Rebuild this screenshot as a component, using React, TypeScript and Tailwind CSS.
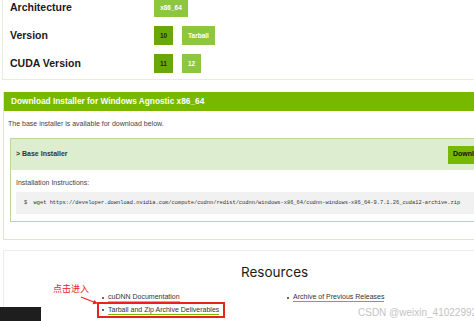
import React from 'react';

const dark = 'bg-[#69a80a] text-[#1d2a05]';
const light = 'bg-[#8dc63f] text-white';

function OptionRow({ label, options }: { label: string; options: { text: string; w: string; on?: boolean }[] }) {
  return (
    <div className="flex items-center h-[19px]">
      <div className="w-[144px] text-[10.5px] font-bold text-[#1a1a1a]">{label}</div>
      <div className="flex gap-[9px]">
        {options.map((o) => (
          <div
            key={o.text}
            className={`${o.w} h-[19px] flex items-center justify-center text-[6.5px] font-bold ${o.on ? dark : light}`}
          >
            {o.text}
          </div>
        ))}
      </div>
    </div>
  );
}

function Bullet() {
  return <span className="inline-block w-[2px] h-[2px] bg-[#333] rounded-full mr-[4px] shrink-0" />;
}

export default function App() {
  return (
    <div className="relative w-[474px] h-[321px] overflow-hidden bg-white font-['Liberation_Sans',Arial,sans-serif]">
      <div className="w-[560px]">
        {/* Selector card */}
        <div className="-mt-[10px] ml-[2px] border border-[#e6eddb] pt-[7px] pb-[6px] pl-[7px] flex flex-col gap-[9px]">
          <OptionRow label="Architecture" options={[{ text: 'x86_64', w: 'w-[34px]' }]} />
          <OptionRow
            label="Version"
            options={[
              { text: '10', w: 'w-[19px]', on: true },
              { text: 'Tarball', w: 'w-[33px]' },
            ]}
          />
          <OptionRow
            label="CUDA Version"
            options={[
              { text: '11', w: 'w-[19px]', on: true },
              { text: '12', w: 'w-[19px]' },
            ]}
          />
        </div>

        {/* Download card */}
        <div className="mt-[12px] ml-[3px] border-x border-b border-[#dbe8c9]">
          <div className="h-[19px] bg-[#76b900] flex items-center pl-[7px] text-white text-[8.3px] font-bold">
            Download Installer for Windows Agnostic x86_64
          </div>
          <div className="pl-[4px] pt-[8px] pb-[17px]">
            <p className="text-[7px] leading-[10px] text-[#444] mb-[9px]">
              The base installer is available for download below.
            </p>
            <div className="ml-[2px] border border-[#b9da9c]">
              <div className="h-[31px] bg-[#dcedd0] flex items-center pl-[5px]">
                <span className="w-[432px] text-[7px] font-bold text-[#333]">&gt; Base Installer</span>
                <span className="h-[18px] px-[5px] flex items-center bg-[#76b900] text-[7px] font-bold text-[#111]">
                  Download
                </span>
              </div>
              <div className="pl-[5px] pt-[8px] pb-[7px]">
                <p className="text-[7px] leading-[10px] text-[#444]">Installation Instructions:</p>
                <div className="mt-[4px] h-[22px] bg-[#f1f1f1] flex items-center pl-[8px] font-['Liberation_Mono',monospace] text-[5.35px] text-[#333] whitespace-pre">
                  {'$  wget https://developer.download.nvidia.com/compute/cudnn/redist/cudnn/windows-x86_64/cudnn-windows-x86_64-9.7.1.26_cuda12-archive.zip'}
                </div>
              </div>
            </div>
          </div>
        </div>

        {/* Resources card */}
        <div className="mt-[10px] ml-[3px] border border-[#ececec] h-[120px] pt-[12px]">
          <h2 className="pl-[237px] text-[13.5px] leading-[18px] text-[#1a1a1a] font-['Inter',sans-serif]">Resources</h2>
          <div className="flex mt-[12px] ml-[93px] text-[7px] text-[#333]">
            <ul className="w-[190px]">
              <li className="flex items-center h-[9px] px-[3px] border-x-2 border-transparent">
                <Bullet />
                <span className="border-b border-[#9ccc65] leading-[8px]">cuDNN Documentation</span>
              </li>
              <li className="flex items-center w-[128px] h-[16px] px-[3px] border-2 border-[#e8231e]">
                <Bullet />
                <span className="border-b border-[#76b900] leading-[8px]">Tarball and Zip Archive Deliverables</span>
              </li>
            </ul>
            <ul>
              <li className="flex items-center h-[9px]">
                <Bullet />
                <span className="border-b border-[#76b900] leading-[8px]">Archive of Previous Releases</span>
              </li>
            </ul>
          </div>
        </div>
      </div>

      {/* annotation */}
      <span className="absolute left-[53px] top-[283px] text-[9px] leading-[11px] text-[#e8231e] font-['Noto_Sans_CJK_SC',sans-serif]">
        点击进入
      </span>
      <svg className="absolute left-[78px] top-[294px]" width="24" height="12" viewBox="0 0 24 12">
        <line x1="3" y1="3" x2="17" y2="8.5" stroke="#e8231e" strokeWidth="1.2" />
        <polygon points="20,9.6 14.5,10.2 16.2,6" fill="#e8231e" />
      </svg>

      {/* overlays */}
      <div className="absolute left-0 top-[307px] w-[41px] h-[14px] bg-[#1e1e1e]" />
      <span className="absolute left-[358px] top-[307px] text-[10px] leading-[12px] text-[#c4c4c4] whitespace-nowrap">
        CSDN @weixin_410229922
      </span>
    </div>
  );
}
